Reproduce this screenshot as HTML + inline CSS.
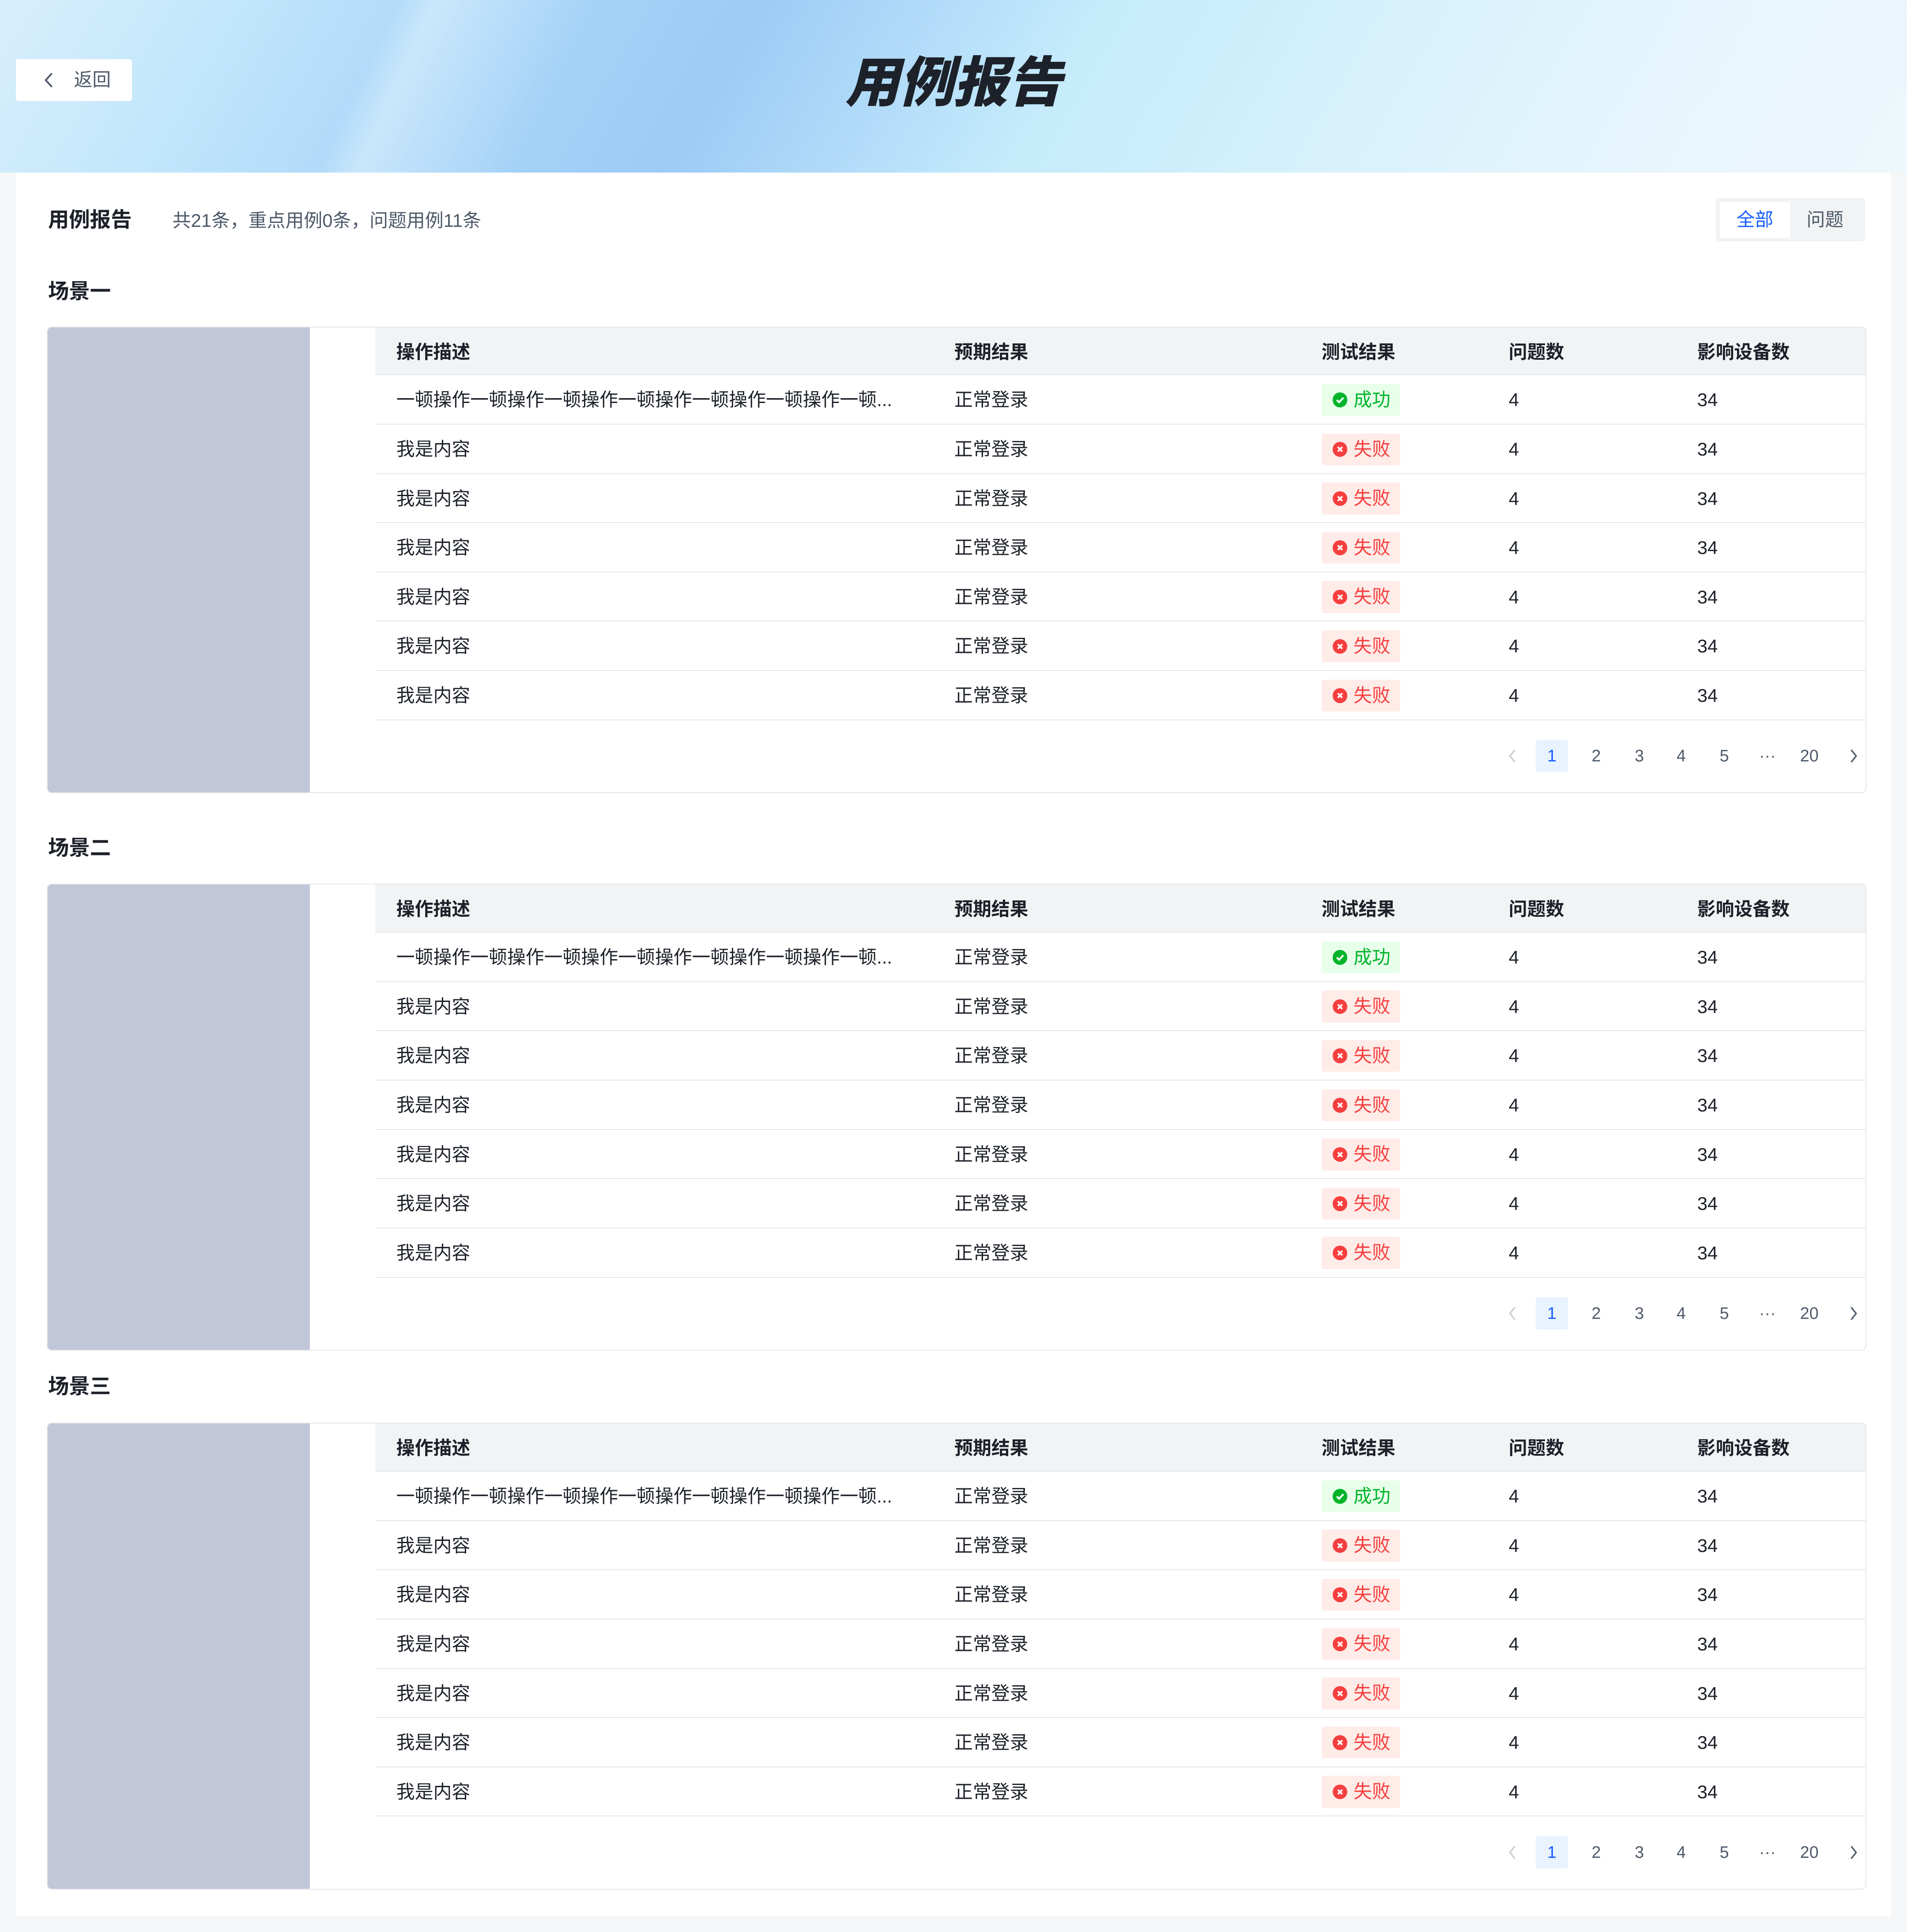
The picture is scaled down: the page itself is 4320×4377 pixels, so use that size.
<!DOCTYPE html>
<html><head><meta charset="utf-8"><style>
html{zoom:2.790698}
*{box-sizing:border-box;margin:0;padding:0}
body{width:1548px;height:1568.5px;overflow:hidden;background:#f5f6f8;font-family:"Liberation Sans","Noto Sans CJK SC",sans-serif;color:#1d2129;position:relative}
.hdr{position:absolute;left:0;top:0;width:1548px;height:140px;background:
linear-gradient(115deg,rgba(255,255,255,0) 0,rgba(255,255,255,0) 20%,rgba(255,255,255,.35) 22%,rgba(255,255,255,0) 30%),
linear-gradient(120deg,#d8effc 0%,#c2e6fb 12%,#a9d6f8 25%,#9ccbf6 38%,#c5ebfb 55%,#d6f1fc 70%,#e6f5fd 85%,#eef7fc 100%)}
.back{position:absolute;left:13px;top:48px;width:94px;height:34px;background:#fff;border-radius:2px;font-size:15px;color:#4e5969;line-height:34px;padding-left:47px}
.back svg{position:absolute;left:22px;top:10px}
.title{position:absolute;left:0;width:1548px;top:32px;text-align:center;font-size:44px;font-weight:900;font-style:italic;color:#1d2129}
.card{position:absolute;left:13px;top:140px;width:1522px;height:1415.5px;background:#fff}
.h1{position:absolute;left:26px;top:27px;font-size:17px;font-weight:bold;line-height:24px}
.sum{position:absolute;left:127px;top:28px;font-size:15px;color:#4e5969;line-height:22px}
.tabs{position:absolute;left:1380px;top:21px;width:121px;height:35px;background:#f2f3f5;border-radius:2px;padding:3px}
.tabs span{display:inline-block;width:57px;height:29px;line-height:29px;text-align:center;font-size:15px;color:#4e5969}
.tabs .on{background:#fff;color:#165dff}
.sec{position:absolute;left:26px;font-size:17px;font-weight:bold;line-height:24px}
.box{position:absolute;left:25px;width:1477px;height:379px;border:1px solid #e5e6eb;border-radius:4px;overflow:hidden;background:#fff}
.gray{position:absolute;left:0;top:0;width:213px;height:100%;background:#c1c7d9}
.tbl{position:absolute;left:266px;top:0;right:0}
.row{height:40px;border-bottom:1px solid #e5e6eb;position:relative;font-size:15px;line-height:40px}
.row.th{height:39px;background:#f2f3f5;font-weight:bold;line-height:40px}
.row span{position:absolute;top:0}
.c1{left:17px}.c2{left:470px}.c3{left:768px}.c4{left:920px}.c5{left:1073px}
.tag{position:absolute;top:7px;left:768px;width:64px;height:26px;border-radius:2px;font-size:15px;line-height:26px;padding-left:26px}
.ok{background:#e8ffea;color:#00b42a}.bad{background:#ffece8;color:#f53f3f}
.tag i{position:absolute;left:9px;top:7px;width:12px;height:12px;border-radius:50%}
.ok i{background:#00b42a}.bad i{background:#f53f3f}
.tag i svg{position:absolute;left:0;top:0}
.pg{position:absolute;top:335px;left:1170px;height:26px;font-size:13.5px;color:#4e5969}
.pg span{position:absolute;top:0;height:26px;line-height:26px;text-align:center}
.pg .cur{background:#e8f3ff;color:#165dff;border-radius:2px;width:26px}
.pg svg{position:absolute;top:7px}
</style></head><body>
<div class="hdr"></div>
<div class="back"><svg width="10" height="14" viewBox="0 0 10 14"><path d="M7 1.5 2 7l5 5.5" fill="none" stroke="#4e5969" stroke-width="1.4"/></svg>返回</div>
<div class="title">用例报告</div>
<div class="card">
<div class="h1">用例报告</div>
<div class="sum">共21条，重点用例0条，问题用例11条</div>
<div class="tabs"><span class="on">全部</span><span>问题</span></div>

<div class="sec" style="top:85px">场景一</div>
<div class="box" style="top:125px"><div class="gray"></div><div class="tbl">
<div class="row th"><span class="c1">操作描述</span><span class="c2">预期结果</span><span class="c3">测试结果</span><span class="c4">问题数</span><span class="c5">影响设备数</span></div>
<div class="row"><span class="c1">一顿操作一顿操作一顿操作一顿操作一顿操作一顿操作一顿...</span><span class="c2">正常登录</span><div class="tag ok"><i><svg width="12" height="12"><path d="M3.3 6.2 5.2 8 8.7 4.3" fill="none" stroke="#fff" stroke-width="1.5"/></svg></i>成功</div><span class="c4">4</span><span class="c5">34</span></div>
<div class="row"><span class="c1">我是内容</span><span class="c2">正常登录</span><div class="tag bad"><i><svg width="12" height="12"><path d="M4.2 4.2 7.8 7.8M7.8 4.2 4.2 7.8" stroke="#fff" stroke-width="1.4"/></svg></i>失败</div><span class="c4">4</span><span class="c5">34</span></div>
<div class="row"><span class="c1">我是内容</span><span class="c2">正常登录</span><div class="tag bad"><i><svg width="12" height="12"><path d="M4.2 4.2 7.8 7.8M7.8 4.2 4.2 7.8" stroke="#fff" stroke-width="1.4"/></svg></i>失败</div><span class="c4">4</span><span class="c5">34</span></div>
<div class="row"><span class="c1">我是内容</span><span class="c2">正常登录</span><div class="tag bad"><i><svg width="12" height="12"><path d="M4.2 4.2 7.8 7.8M7.8 4.2 4.2 7.8" stroke="#fff" stroke-width="1.4"/></svg></i>失败</div><span class="c4">4</span><span class="c5">34</span></div>
<div class="row"><span class="c1">我是内容</span><span class="c2">正常登录</span><div class="tag bad"><i><svg width="12" height="12"><path d="M4.2 4.2 7.8 7.8M7.8 4.2 4.2 7.8" stroke="#fff" stroke-width="1.4"/></svg></i>失败</div><span class="c4">4</span><span class="c5">34</span></div>
<div class="row"><span class="c1">我是内容</span><span class="c2">正常登录</span><div class="tag bad"><i><svg width="12" height="12"><path d="M4.2 4.2 7.8 7.8M7.8 4.2 4.2 7.8" stroke="#fff" stroke-width="1.4"/></svg></i>失败</div><span class="c4">4</span><span class="c5">34</span></div>
<div class="row"><span class="c1">我是内容</span><span class="c2">正常登录</span><div class="tag bad"><i><svg width="12" height="12"><path d="M4.2 4.2 7.8 7.8M7.8 4.2 4.2 7.8" stroke="#fff" stroke-width="1.4"/></svg></i>失败</div><span class="c4">4</span><span class="c5">34</span></div>
</div>
<div class="pg"><svg style="left:15px" width="8" height="12"><path d="M6 1 2 6l4 5" fill="none" stroke="#c9cdd4" stroke-width="1.2"/></svg><span class="cur" style="left:38px">1</span><span style="left:80px;width:14px">2</span><span style="left:115px;width:14px">3</span><span style="left:149px;width:14px">4</span><span style="left:184px;width:14px">5</span><span style="left:216px;width:20px">···</span><span style="left:250px;width:20px">20</span><svg style="left:292px" width="8" height="12"><path d="M2 1l4 5-4 5" fill="none" stroke="#4e5969" stroke-width="1.2"/></svg></div>
</div>

<div class="sec" style="top:537px">场景二</div>
<div class="box" style="top:577.5px"><div class="gray"></div><div class="tbl">
<div class="row th"><span class="c1">操作描述</span><span class="c2">预期结果</span><span class="c3">测试结果</span><span class="c4">问题数</span><span class="c5">影响设备数</span></div>
<div class="row"><span class="c1">一顿操作一顿操作一顿操作一顿操作一顿操作一顿操作一顿...</span><span class="c2">正常登录</span><div class="tag ok"><i><svg width="12" height="12"><path d="M3.3 6.2 5.2 8 8.7 4.3" fill="none" stroke="#fff" stroke-width="1.5"/></svg></i>成功</div><span class="c4">4</span><span class="c5">34</span></div>
<div class="row"><span class="c1">我是内容</span><span class="c2">正常登录</span><div class="tag bad"><i><svg width="12" height="12"><path d="M4.2 4.2 7.8 7.8M7.8 4.2 4.2 7.8" stroke="#fff" stroke-width="1.4"/></svg></i>失败</div><span class="c4">4</span><span class="c5">34</span></div>
<div class="row"><span class="c1">我是内容</span><span class="c2">正常登录</span><div class="tag bad"><i><svg width="12" height="12"><path d="M4.2 4.2 7.8 7.8M7.8 4.2 4.2 7.8" stroke="#fff" stroke-width="1.4"/></svg></i>失败</div><span class="c4">4</span><span class="c5">34</span></div>
<div class="row"><span class="c1">我是内容</span><span class="c2">正常登录</span><div class="tag bad"><i><svg width="12" height="12"><path d="M4.2 4.2 7.8 7.8M7.8 4.2 4.2 7.8" stroke="#fff" stroke-width="1.4"/></svg></i>失败</div><span class="c4">4</span><span class="c5">34</span></div>
<div class="row"><span class="c1">我是内容</span><span class="c2">正常登录</span><div class="tag bad"><i><svg width="12" height="12"><path d="M4.2 4.2 7.8 7.8M7.8 4.2 4.2 7.8" stroke="#fff" stroke-width="1.4"/></svg></i>失败</div><span class="c4">4</span><span class="c5">34</span></div>
<div class="row"><span class="c1">我是内容</span><span class="c2">正常登录</span><div class="tag bad"><i><svg width="12" height="12"><path d="M4.2 4.2 7.8 7.8M7.8 4.2 4.2 7.8" stroke="#fff" stroke-width="1.4"/></svg></i>失败</div><span class="c4">4</span><span class="c5">34</span></div>
<div class="row"><span class="c1">我是内容</span><span class="c2">正常登录</span><div class="tag bad"><i><svg width="12" height="12"><path d="M4.2 4.2 7.8 7.8M7.8 4.2 4.2 7.8" stroke="#fff" stroke-width="1.4"/></svg></i>失败</div><span class="c4">4</span><span class="c5">34</span></div>
</div>
<div class="pg"><svg style="left:15px" width="8" height="12"><path d="M6 1 2 6l4 5" fill="none" stroke="#c9cdd4" stroke-width="1.2"/></svg><span class="cur" style="left:38px">1</span><span style="left:80px;width:14px">2</span><span style="left:115px;width:14px">3</span><span style="left:149px;width:14px">4</span><span style="left:184px;width:14px">5</span><span style="left:216px;width:20px">···</span><span style="left:250px;width:20px">20</span><svg style="left:292px" width="8" height="12"><path d="M2 1l4 5-4 5" fill="none" stroke="#4e5969" stroke-width="1.2"/></svg></div>
</div>

<div class="sec" style="top:974px">场景三</div>
<div class="box" style="top:1015px"><div class="gray"></div><div class="tbl">
<div class="row th"><span class="c1">操作描述</span><span class="c2">预期结果</span><span class="c3">测试结果</span><span class="c4">问题数</span><span class="c5">影响设备数</span></div>
<div class="row"><span class="c1">一顿操作一顿操作一顿操作一顿操作一顿操作一顿操作一顿...</span><span class="c2">正常登录</span><div class="tag ok"><i><svg width="12" height="12"><path d="M3.3 6.2 5.2 8 8.7 4.3" fill="none" stroke="#fff" stroke-width="1.5"/></svg></i>成功</div><span class="c4">4</span><span class="c5">34</span></div>
<div class="row"><span class="c1">我是内容</span><span class="c2">正常登录</span><div class="tag bad"><i><svg width="12" height="12"><path d="M4.2 4.2 7.8 7.8M7.8 4.2 4.2 7.8" stroke="#fff" stroke-width="1.4"/></svg></i>失败</div><span class="c4">4</span><span class="c5">34</span></div>
<div class="row"><span class="c1">我是内容</span><span class="c2">正常登录</span><div class="tag bad"><i><svg width="12" height="12"><path d="M4.2 4.2 7.8 7.8M7.8 4.2 4.2 7.8" stroke="#fff" stroke-width="1.4"/></svg></i>失败</div><span class="c4">4</span><span class="c5">34</span></div>
<div class="row"><span class="c1">我是内容</span><span class="c2">正常登录</span><div class="tag bad"><i><svg width="12" height="12"><path d="M4.2 4.2 7.8 7.8M7.8 4.2 4.2 7.8" stroke="#fff" stroke-width="1.4"/></svg></i>失败</div><span class="c4">4</span><span class="c5">34</span></div>
<div class="row"><span class="c1">我是内容</span><span class="c2">正常登录</span><div class="tag bad"><i><svg width="12" height="12"><path d="M4.2 4.2 7.8 7.8M7.8 4.2 4.2 7.8" stroke="#fff" stroke-width="1.4"/></svg></i>失败</div><span class="c4">4</span><span class="c5">34</span></div>
<div class="row"><span class="c1">我是内容</span><span class="c2">正常登录</span><div class="tag bad"><i><svg width="12" height="12"><path d="M4.2 4.2 7.8 7.8M7.8 4.2 4.2 7.8" stroke="#fff" stroke-width="1.4"/></svg></i>失败</div><span class="c4">4</span><span class="c5">34</span></div>
<div class="row"><span class="c1">我是内容</span><span class="c2">正常登录</span><div class="tag bad"><i><svg width="12" height="12"><path d="M4.2 4.2 7.8 7.8M7.8 4.2 4.2 7.8" stroke="#fff" stroke-width="1.4"/></svg></i>失败</div><span class="c4">4</span><span class="c5">34</span></div>
</div>
<div class="pg"><svg style="left:15px" width="8" height="12"><path d="M6 1 2 6l4 5" fill="none" stroke="#c9cdd4" stroke-width="1.2"/></svg><span class="cur" style="left:38px">1</span><span style="left:80px;width:14px">2</span><span style="left:115px;width:14px">3</span><span style="left:149px;width:14px">4</span><span style="left:184px;width:14px">5</span><span style="left:216px;width:20px">···</span><span style="left:250px;width:20px">20</span><svg style="left:292px" width="8" height="12"><path d="M2 1l4 5-4 5" fill="none" stroke="#4e5969" stroke-width="1.2"/></svg></div>
</div>
</div>
</body></html>
